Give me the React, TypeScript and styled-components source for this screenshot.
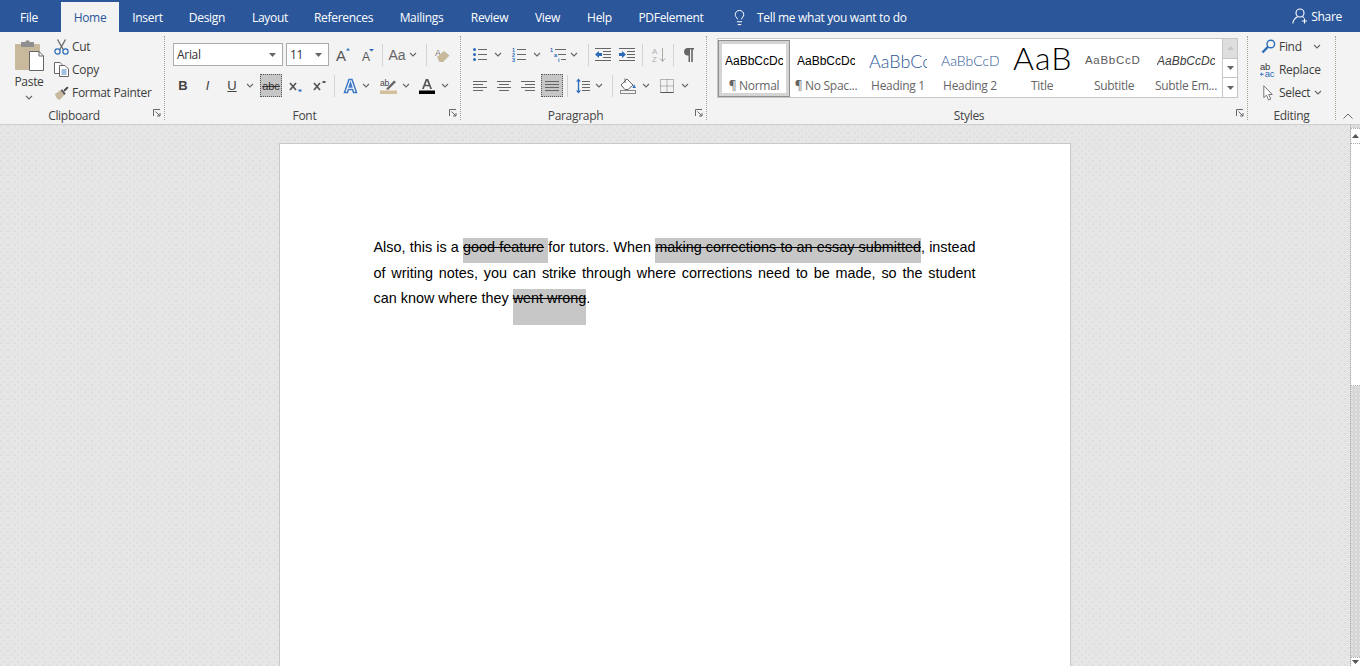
import type { FC, ReactNode } from "react";
import { Lightbulb } from "lucide-react";
import styled, { createGlobalStyle } from "styled-components";

const GlobalStyle = createGlobalStyle`
  html, body {
    height: 100%;
    margin: 0;
    overflow: hidden;
  }

  body {
    color: #3c3c3c;
    font-family: "Open Sans", "Noto Sans", sans-serif;
    font-size: 12px;
    letter-spacing: -0.3px;
  }

  * {
    box-sizing: border-box;
  }
`;

const Window = styled.div`
  display: flex;
  flex-direction: column;
  height: 666px;
  overflow: hidden;
  width: 1360px;
`;

const TabBar = styled.div`
  align-items: flex-end;
  background-color: #2b579a;
  color: #fff;
  display: flex;
  flex: none;
  height: 32px;
`;

const Tab = styled.div<{ $w: number; $ml?: number; $active?: boolean }>`
  align-items: center;
  background-color: ${({ $active }) => ($active ? "#f3f3f3" : "transparent")};
  color: ${({ $active }) => ($active ? "#2b579a" : "#fff")};
  display: flex;
  height: 30px;
  justify-content: center;
  margin-left: ${({ $ml }) => $ml ?? 0}px;
  padding-top: 1px;
  width: ${({ $w }) => $w}px;
`;

const TellMe = styled.div`
  align-items: center;
  display: flex;
  gap: 9px;
  height: 30px;
  margin-left: 14px;
`;

const Share = styled.div`
  align-items: center;
  display: flex;
  gap: 3px;
  height: 32px;
  margin-left: auto;
  padding-right: 18px;
`;

const Ribbon = styled.div`
  background-color: #f3f3f3;
  border-bottom: 1px solid #cfcfcf;
  display: flex;
  flex: none;
  height: 93px;
  padding-top: 4px;
  position: relative;
`;

const Group = styled.section<{ $w: number; $pad?: number }>`
  border-right: 1px dotted #a89f90;
  display: flex;
  flex-direction: column;
  flex: none;
  height: 84px;
  padding-left: ${({ $pad }) => $pad ?? 8}px;
  position: relative;
  width: ${({ $w }) => $w}px;
`;

const GroupBody = styled.div`
  display: flex;
  flex-direction: column;
  gap: 8px;
  padding-top: 7px;
`;

const GroupLabel = styled.div<{ $noLauncher?: boolean; $pad?: number }>`
  color: #444;
  height: 20px;
  line-height: 20px;
  margin-bottom: -6px;
  margin-left: ${({ $noLauncher, $pad }) => ($noLauncher ? 0 : -($pad ?? 8))}px;
  margin-top: auto;
  padding-right: ${({ $noLauncher }) => ($noLauncher ? 0 : 16)}px;
  text-align: center;
`;

const Launcher = styled.svg`
  bottom: 3px;
  position: absolute;
  right: 3px;
`;

const Row = styled.div`
  align-items: center;
  display: flex;
  height: 23px;
`;

const Cell = styled.div<{ $w: number; $ml?: number; $on?: boolean }>`
  align-items: center;
  background-color: ${({ $on }) => ($on ? "#c6c6c6" : "transparent")};
  border: ${({ $on }) => ($on ? "1px dotted #555" : "none")};
  display: flex;
  flex: none;
  height: ${({ $on }) => ($on ? "23px" : "auto")};
  justify-content: center;
  margin-left: ${({ $ml }) => $ml ?? 0}px;
  width: ${({ $w }) => $w}px;
`;

const Sep = styled.div<{ $ml: number }>`
  background-color: #d2d2d2;
  flex: none;
  height: 22px;
  margin-left: ${({ $ml }) => $ml}px;
  width: 1px;
`;

const Combo = styled.div<{ $w: number; $ml?: number }>`
  align-items: center;
  background-color: #fff;
  border: 1px solid #ababab;
  color: #333;
  display: flex;
  height: 23px;
  justify-content: space-between;
  margin-left: ${({ $ml }) => $ml ?? 0}px;
  padding: 0 6px 0 3px;
  width: ${({ $w }) => $w}px;
`;

const Letter = styled.span<{ $bold?: boolean; $italic?: boolean; $under?: boolean }>`
  color: #444;
  font-family: "Liberation Sans", sans-serif;
  font-size: 13px;
  font-style: ${({ $italic }) => ($italic ? "italic" : "normal")};
  font-weight: ${({ $bold }) => ($bold ? 700 : 400)};
  letter-spacing: 0;
  line-height: 1;
  text-decoration: ${({ $under }) => ($under ? "underline" : "none")};
`;

const ChangeCase = styled(Letter)`
  color: #666;
  font-size: 14px;
`;

const StrikeGlyph = styled.span`
  color: #333;
  font-family: "Liberation Sans", sans-serif;
  font-size: 11px;
  letter-spacing: 0;
  text-decoration: line-through;
`;

const ClipboardBody = styled.div`
  display: flex;
  margin-left: -8px;
`;

const PasteColumn = styled.div`
  align-items: center;
  display: flex;
  flex-direction: column;
  padding-left: 4px;
  padding-top: 4px;
  width: 54px;
`;

const PasteLabel = styled.div`
  line-height: 16px;
  margin-top: 3px;
`;

const PasteChevron = styled.div`
  display: flex;
  margin-top: 5px;
`;

const CommandList = styled.div<{ $pad?: number }>`
  display: flex;
  flex-direction: column;
  margin-top: -1px;
  padding-left: ${({ $pad }) => $pad ?? 0}px;
`;

const Command = styled.div`
  align-items: center;
  display: flex;
  gap: 3px;
  height: 23px;
  white-space: nowrap;
`;

const CommandIcon = styled.div<{ $w: number }>`
  display: flex;
  flex: none;
  justify-content: center;
  width: ${({ $w }) => $w}px;
`;

const TrailChevron = styled.div<{ $ml: number }>`
  display: flex;
  margin-left: ${({ $ml }) => $ml}px;
`;

const Gallery = styled.div`
  background-color: #fff;
  border: 1px solid #c6c6c6;
  display: flex;
  height: 60px;
  margin-top: 2px;
  width: 521px;
`;

const StyleItem = styled.div<{ $selected?: boolean }>`
  align-items: center;
  border: ${({ $selected }) => ($selected ? "1px solid #8f8f8f" : "1px solid transparent")};
  box-shadow: ${({ $selected }) => ($selected ? "inset 0 0 0 3px #d4d4d4" : "none")};
  display: flex;
  flex: 1;
  flex-direction: column;
  margin: ${({ $selected }) => ($selected ? "1px 0 0" : "0")};
  min-width: 0;
  overflow: hidden;
  padding: 0 6px;
`;

const StylePreview = styled.div<{
  $size: number;
  $color?: string;
  $italic?: boolean;
  $light?: boolean;
  $spacing?: number;
  $title?: boolean;
  $selected?: boolean;
}>`
  align-items: ${({ $title }) => ($title ? "flex-end" : "center")};
  color: ${({ $color }) => $color ?? "#000"};
  display: flex;
  flex: none;
  font-family: ${({ $light }) =>
    $light ? '"Lato", "Open Sans", sans-serif' : '"Liberation Sans", sans-serif'};
  font-size: ${({ $size }) => $size}px;
  font-style: ${({ $italic }) => ($italic ? "italic" : "normal")};
  font-weight: ${({ $light }) => ($light ? 300 : 400)};
  height: ${({ $title, $selected }) => ($title ? 31 : $selected ? 37 : 38)}px;
  letter-spacing: ${({ $spacing }) => $spacing ?? 0}px;
  line-height: 1;
  margin-top: ${({ $title }) => ($title ? 7 : 0)}px;
  overflow: hidden;
  padding: ${({ $title, $selected }) => ($title ? "0 0 4px" : $selected ? "2px 0 0" : "3px 0 0")};
  white-space: nowrap;
  width: 100%;
`;

const StyleName = styled.div`
  color: #666;
  line-height: 16px;
  white-space: nowrap;
`;

const GalleryScroll = styled.div`
  border-left: 1px solid #c6c6c6;
  display: flex;
  flex: none;
  flex-direction: column;
  width: 15px;
`;

const ScrollCell = styled.div<{ $off?: boolean }>`
  align-items: center;
  background-color: ${({ $off }) => ($off ? "#dedede" : "#fff")};
  border-bottom: 1px solid #c6c6c6;
  display: flex;
  flex: 1;
  justify-content: center;

  &:last-child {
    border-bottom: none;
  }
`;

const Collapse = styled.svg`
  bottom: 5px;
  position: absolute;
  right: 7px;
`;

const Workspace = styled.div`
  background-color: #e6e6e6;
  background-image: radial-gradient(circle at 1px 1px, #dedede 0.7px, transparent 0.9px),
    radial-gradient(circle at 1px 1px, #e0e0e0 0.7px, transparent 0.9px);
  background-position: 0 0, 3px 4px;
  background-size: 7px 7px;
  display: flex;
  flex: 1;
  min-height: 0;
`;

const PageArea = styled.div`
  display: flex;
  flex: 1;
  justify-content: center;
  min-width: 0;
  padding-right: 1px;
  padding-top: 18px;
`;

const Page = styled.div`
  background-color: #fff;
  border: 1px solid #c8c8c8;
  border-bottom: none;
  height: 700px;
  padding: 91px 94px 0 94px;
  width: 792px;
`;

const Paragraph = styled.p`
  color: #000;
  font-family: "Liberation Sans", Arial, sans-serif;
  font-size: 14.4px;
  letter-spacing: 0;
  line-height: 25.5px;
  margin: 0;
  text-align: justify;
`;

const NoBreak = styled.span`
  white-space: nowrap;
`;

const Selected = styled.span<{ $tall?: boolean }>`
  background-color: #c6c7c6;
  padding: 1px 0 ${({ $tall }) => ($tall ? 19 : 8)}px;
`;

const Struck = styled.span`
  text-decoration: line-through;
`;

const ScrollBar = styled.div`
  background-color: #d6d6d6;
  background-image: radial-gradient(circle at 1px 1px, #e2e2e2 0.7px, transparent 0.9px);
  background-size: 4px 4px;
  border-left: 1px dotted #a8a8a8;
  display: flex;
  flex: none;
  flex-direction: column;
  padding-top: 3px;
  width: 10px;
`;

const ScrollArrow = styled.div<{ $bottom?: boolean }>`
  align-items: center;
  background-color: #fff;
  border-bottom: ${({ $bottom }) => ($bottom ? "none" : "1px dotted #a8a8a8")};
  border-top: 1px dotted #a8a8a8;
  display: flex;
  flex: none;
  height: ${({ $bottom }) => ($bottom ? 9 : 16)}px;
  justify-content: center;
  margin-top: ${({ $bottom }) => ($bottom ? "auto" : "0")};
`;

const ScrollThumb = styled.div`
  background-color: #fff;
  border-bottom: 1px dotted #a8a8a8;
  flex: none;
  height: 242px;
`;

const ChevIcon = () => (
  <svg width="8" height="5" viewBox="0 0 8 5" fill="none" stroke="#666" strokeWidth="1.1">
    <polyline points="1,1 4,4 7,1" />
  </svg>
);

const Chev: FC<{ ml?: number }> = ({ ml }) => (
  <Cell $w={8} $ml={ml}>
    <ChevIcon />
  </Cell>
);

const Caret: FC<{ up?: boolean; color?: string }> = ({ up, color = "#666" }) => (
  <svg width="7" height="4" viewBox="0 0 7 4" fill={color}>
    <polygon points={up ? "0,4 7,4 3.5,0" : "0,0 7,0 3.5,4"} />
  </svg>
);

const LauncherIcon = () => (
  <Launcher width="8" height="8" viewBox="0 0 8 8" fill="none" stroke="#666" strokeWidth="1">
    <path d="M0.5 7V0.5H7" />
    <path d="M2.5 2.5L7 7M7 4V7H4" />
  </Launcher>
);

const PasteIcon = () => (
  <svg width="30" height="31" viewBox="0 0 30 31">
    <rect x="1" y="4" width="25" height="26" rx="1" fill="#c8b89c" />
    <rect x="7" y="2" width="13" height="5" fill="#8f8f8f" />
    <circle cx="13.5" cy="2.5" r="2.3" fill="#8f8f8f" />
    <path d="M15.5 11.5H25L29.5 16V30.5H15.5Z" fill="#fff" stroke="#666" />
    <path d="M25 11.5V16H29.5" fill="none" stroke="#666" />
  </svg>
);

const CutIcon = () => (
  <svg width="15" height="16" viewBox="0 0 15 16" fill="none">
    <path d="M3.5 0.5L9.5 11M11.5 0.5L5.5 11" stroke="#666" strokeWidth="1.3" />
    <circle cx="3.5" cy="12.5" r="2.6" stroke="#2b6cb8" strokeWidth="1.2" />
    <circle cx="11.5" cy="12.5" r="2.6" stroke="#2b6cb8" strokeWidth="1.2" />
  </svg>
);

const CopyIcon = () => (
  <svg width="15" height="15" viewBox="0 0 15 15" fill="#fff" stroke="#666">
    <path d="M0.5 0.5H6L8 2.5V11.5H0.5Z" />
    <path d="M5.5 3.5H11L14.5 7V14.5H5.5Z" />
    <path d="M7.5 8H12.5M7.5 10H12.5M7.5 12H12.5" stroke="#4a7ebb" />
  </svg>
);

const BrushIcon = () => (
  <svg width="16" height="16" viewBox="0 0 16 16">
    <path d="M1 9L7 5L11 10L6 15.5C4 15 1.5 12 1 9Z" fill="#c8b89c" />
    <path d="M7 5L11 10L12.5 8.5L8.5 4Z" fill="#555" />
    <path d="M10 5L14 1L15.5 2.5L11.5 6.5Z" fill="#444" />
  </svg>
);

const GrowIcon: FC<{ shrink?: boolean }> = ({ shrink }) => (
  <svg width="16" height="16" viewBox="0 0 16 16">
    <text
      x={shrink ? 3 : 1}
      y="14"
      fontFamily="Liberation Sans"
      fontSize={shrink ? 12 : 15}
      fill="#555"
    >
      A
    </text>
    <polygon points={shrink ? "10,2 15,2 12.5,4.5" : "11,3.5 15,3.5 13,1"} fill="#2b6cb8" />
  </svg>
);

const ClearIcon = () => (
  <svg width="16" height="16" viewBox="0 0 16 16">
    <text x="1" y="9" fontFamily="Liberation Sans" fontSize="9" fill="#777">
      A
    </text>
    <path d="M3 10L10 4L15.5 8.5L9 15L5.5 15Z" fill="#c8b89c" />
  </svg>
);

const SubSupIcon: FC<{ sup?: boolean }> = ({ sup }) => (
  <svg width="13" height="13" viewBox="0 0 13 13">
    <path d="M1 4L7 11M7 4L1 11" stroke="#555" strokeWidth="1.7" />
    <rect x="9.5" y={sup ? 2 : 10.5} width="3" height="2" fill={sup ? "#555" : "#2b6cb8"} />
  </svg>
);

const TextEffectIcon = () => (
  <svg width="15" height="16" viewBox="0 0 15 16">
    <path
      d="M6 1.5H9L13.5 14.5H10.5L9.6 11.5H5.4L4.5 14.5H1.5ZM6.2 9H8.8L7.5 5Z"
      fill="#fff"
      stroke="#3f78c4"
      strokeWidth="1.5"
    />
  </svg>
);

const HighlightIcon = () => (
  <svg width="17" height="16" viewBox="0 0 17 16">
    <text x="0" y="8" fontFamily="Liberation Sans" fontSize="8.5" fill="#444">
      ab
    </text>
    <path d="M6 11L14 2.5L16 4L8 12Z" fill="#666" />
    <rect x="0" y="12.5" width="17" height="3.5" fill="#d3bf99" />
  </svg>
);

const FontColorIcon = () => (
  <svg width="16" height="16" viewBox="0 0 16 16">
    <path d="M6.8 1H9.2L13 11H11.2L10.2 8.2H5.8L4.8 11H3ZM6.3 6.8H9.7L8 2.8Z" fill="#555" />
    <rect y="12.5" width="16" height="3.5" fill="#000" />
  </svg>
);

const BulletsIcon = () => (
  <svg width="14" height="15" viewBox="0 0 14 15" stroke="#666">
    <path d="M5 2.5H14M5 7.5H14M5 12.5H14" />
    <g fill="#2b6cb8" stroke="none">
      <circle cx="1.5" cy="2.5" r="1.5" />
      <circle cx="1.5" cy="7.5" r="1.5" />
      <circle cx="1.5" cy="12.5" r="1.5" />
    </g>
  </svg>
);

const NumberedIcon = () => (
  <svg width="14" height="15" viewBox="0 0 14 15" stroke="#666">
    <path d="M5 2.5H14M5 7.5H14M5 12.5H14" />
    <g fontFamily="Liberation Sans" fontSize="5.5" fontWeight="700" fill="#2b6cb8" stroke="none">
      <text x="0" y="5">1</text>
      <text x="0" y="10">2</text>
      <text x="0" y="15">3</text>
    </g>
  </svg>
);

const MultilevelIcon = () => (
  <svg width="16" height="15" viewBox="0 0 16 15" stroke="#666">
    <path d="M5 2.5H16M8 7.5H16M11 12.5H16" />
    <g fontFamily="Liberation Sans" fontSize="5.5" fontWeight="700" fill="#2b6cb8" stroke="none">
      <text x="0" y="5">1</text>
      <text x="4" y="10">a</text>
      <text x="8" y="15">i</text>
    </g>
  </svg>
);

const IndentIcon: FC<{ out?: boolean }> = ({ out }) => (
  <svg width="16" height="13" viewBox="0 0 16 13" stroke="#666">
    <path d="M0 0.5H16M8 3.5H16M8 6.5H16M8 9.5H16M0 12.5H16" />
    <path
      d={out ? "M0 6.5L4 3V5H7V8H4V10Z" : "M7 6.5L3 3V5H0V8H3V10Z"}
      fill="#2b6cb8"
      stroke="none"
    />
  </svg>
);

const SortIcon = () => (
  <svg width="14" height="16" viewBox="0 0 14 16">
    <g fontFamily="Liberation Sans" fontSize="8" fill="#b0b0b0">
      <text x="0" y="7">A</text>
      <text x="0" y="15">Z</text>
    </g>
    <path d="M10.5 1V14M8 11.5L10.5 14.5L13 11.5" fill="none" stroke="#a8a8a8" />
  </svg>
);

const PilcrowIcon = () => (
  <svg width="10" height="14" viewBox="0 0 10 14" fill="#666">
    <path d="M3.5 0H10V1.5H8.8V14H7.2V1.5H6V14H4.5V7.5H3.5C1.5 7.5 0 6 0 3.8C0 1.5 1.5 0 3.5 0Z" />
  </svg>
);

const alignPaths: Record<string, string> = {
  left: "M0 0.5H14M0 3.5H10M0 6.5H14M0 9.5H10",
  center: "M0 0.5H14M2 3.5H12M0 6.5H14M2 9.5H12",
  right: "M0 0.5H14M4 3.5H14M0 6.5H14M4 9.5H14",
  justify: "M0 0.5H14M0 3.5H14M0 6.5H14M0 9.5H14",
};

const AlignIcon: FC<{ kind: string }> = ({ kind }) => (
  <svg width="14" height="10" viewBox="0 0 14 10" stroke="#666">
    <path d={alignPaths[kind]} />
  </svg>
);

const LineSpacingIcon = () => (
  <svg width="14" height="16" viewBox="0 0 14 16" stroke="#666">
    <path d="M6 3.5H14M6 6.5H14M6 9.5H14M6 12.5H14" />
    <path d="M2.5 2V14" stroke="#2b6cb8" strokeWidth="1.3" fill="none" />
    <path d="M0 3.5L2.5 0.5L5 3.5ZM0 12.5L2.5 15.5L5 12.5Z" fill="#2b6cb8" stroke="none" />
  </svg>
);

const ShadingIcon = () => (
  <svg width="16" height="17" viewBox="0 0 16 17">
    <path d="M1 8L7 2L13 8L8 12.5H5Z" fill="#fff" stroke="#666" />
    <path d="M5 1.5V6" stroke="#666" />
    <path d="M14 7L15.8 11H12.5Z" fill="#2b6cb8" />
    <rect x="0.5" y="13.5" width="15" height="3" fill="#f3f3f3" stroke="#888" />
  </svg>
);

const BordersIcon = () => (
  <svg width="14" height="14" viewBox="0 0 14 14" fill="none" stroke="#777" strokeDasharray="1 1">
    <rect x="0.5" y="0.5" width="13" height="13" />
    <path d="M7 0.5V13.5M0.5 7H13.5" />
    <path d="M0.5 13.5H13.5" strokeDasharray="none" stroke="#555" />
  </svg>
);

const FindIcon = () => (
  <svg width="15" height="15" viewBox="0 0 15 15" fill="none" stroke="#2b6cb8">
    <circle cx="9.8" cy="5" r="3.8" strokeWidth="1.4" />
    <path d="M6.8 8L1.5 13.5" strokeWidth="2.4" />
  </svg>
);

const ReplaceIcon = () => (
  <svg width="17" height="16" viewBox="0 0 17 16" fontFamily="Liberation Sans" fontSize="10">
    <text x="0" y="8" fill="#333">ab</text>
    <text x="5" y="15.5" fill="#2b6cb8">ac</text>
    <path d="M0.5 12.5H4M0.5 12.5L2.3 10.8M0.5 12.5L2.3 14.2" stroke="#2b6cb8" fill="none" />
  </svg>
);

const SelectIcon = () => (
  <svg width="10" height="16" viewBox="0 0 10 16" fill="#fff" stroke="#777">
    <path d="M0.8 0.8V12.5L3.5 10.2L5.6 15L7.8 14L5.7 9.5H9.3Z" />
  </svg>
);

const ShareIcon = () => (
  <svg width="16" height="16" viewBox="0 0 16 16" fill="none" stroke="#fff" strokeWidth="1.1">
    <circle cx="8" cy="5" r="4" />
    <path d="M0.8 15.5C1.2 12 3.2 10 5.5 8.8M10.5 8.8C11 9 11.6 9.4 12 9.8" />
    <path d="M12.5 10.5V15.5M10 13H15" />
  </svg>
);

const tabs = [
  { label: "File", w: 58 },
  { label: "Home", w: 58, ml: 3, active: true },
  { label: "Insert", w: 57 },
  { label: "Design", w: 62 },
  { label: "Layout", w: 64 },
  { label: "References", w: 83 },
  { label: "Mailings", w: 73 },
  { label: "Review", w: 63 },
  { label: "View", w: 53 },
  { label: "Help", w: 51 },
  { label: "PDFelement", w: 92 },
];

const galleryStyles: {
  name: string;
  sample: string;
  size: number;
  color?: string;
  italic?: boolean;
  light?: boolean;
  spacing?: number;
  selected?: boolean;
  title?: boolean;
}[] = [
  { name: "¶ Normal", sample: "AaBbCcDc", size: 12, selected: true },
  { name: "¶ No Spac...", sample: "AaBbCcDc", size: 12 },
  { name: "Heading 1", sample: "AaBbCc", size: 18, color: "#2b5797", light: true },
  { name: "Heading 2", sample: "AaBbCcD", size: 14, color: "#2b5797", light: true },
  { name: "Title", sample: "AaB", size: 32, light: true, spacing: 1, title: true },
  { name: "Subtitle", sample: "AaBbCcD", size: 11.5, color: "#5a5a5a", spacing: 0.7 },
  { name: "Subtle Em...", sample: "AaBbCcDc", size: 12, color: "#404040", italic: true },
];

const Item: FC<{ icon: ReactNode; w: number; label: string; chev?: number }> = ({
  icon,
  w,
  label,
  chev,
}) => (
  <Command>
    <CommandIcon $w={w}>{icon}</CommandIcon>
    {label}
    {chev !== undefined && (
      <TrailChevron $ml={chev}>
        <ChevIcon />
      </TrailChevron>
    )}
  </Command>
);

const App: FC = () => (
  <Window>
    <GlobalStyle />
    <TabBar>
      {tabs.map((tab) => (
        <Tab key={tab.label} $w={tab.w} $ml={tab.ml} $active={tab.active}>
          {tab.label}
        </Tab>
      ))}
      <TellMe>
        <Lightbulb size={17} strokeWidth={1.4} color="#fff" />
        Tell me what you want to do
      </TellMe>
      <Share>
        <ShareIcon />
        Share
      </Share>
    </TabBar>

    <Ribbon>
      <Group $w={165}>
        <ClipboardBody>
          <PasteColumn>
            <PasteIcon />
            <PasteLabel>Paste</PasteLabel>
            <PasteChevron>
              <ChevIcon />
            </PasteChevron>
          </PasteColumn>
          <CommandList>
            <Item icon={<CutIcon />} w={15} label="Cut" />
            <Item icon={<CopyIcon />} w={15} label="Copy" />
            <Item icon={<BrushIcon />} w={15} label="Format Painter" />
          </CommandList>
        </ClipboardBody>
        <GroupLabel>Clipboard</GroupLabel>
        <LauncherIcon />
      </Group>

      <Group $w={296}>
        <GroupBody>
          <Row>
            <Combo $w={110}>
              Arial
              <Caret />
            </Combo>
            <Combo $w={43} $ml={3}>
              11
              <Caret />
            </Combo>
            <Cell $w={16} $ml={6}>
              <GrowIcon />
            </Cell>
            <Cell $w={16} $ml={8}>
              <GrowIcon shrink />
            </Cell>
            <Sep $ml={7} />
            <Cell $w={16} $ml={6}>
              <ChangeCase>Aa</ChangeCase>
            </Cell>
            <Chev ml={4} />
            <Sep $ml={9} />
            <Cell $w={16} $ml={7}>
              <ClearIcon />
            </Cell>
          </Row>
          <Row>
            <Cell $w={10} $ml={5}>
              <Letter $bold>B</Letter>
            </Cell>
            <Cell $w={7} $ml={16}>
              <Letter $italic>I</Letter>
            </Cell>
            <Cell $w={10} $ml={16}>
              <Letter $under>U</Letter>
            </Cell>
            <Chev ml={9} />
            <Cell $w={22} $ml={6} $on>
              <StrikeGlyph>abc</StrikeGlyph>
            </Cell>
            <Cell $w={13} $ml={7}>
              <SubSupIcon />
            </Cell>
            <Cell $w={13} $ml={11}>
              <SubSupIcon sup />
            </Cell>
            <Sep $ml={8} />
            <Cell $w={15} $ml={8}>
              <TextEffectIcon />
            </Cell>
            <Chev ml={4} />
            <Cell $w={17} $ml={10}>
              <HighlightIcon />
            </Cell>
            <Chev ml={5} />
            <Cell $w={16} $ml={9}>
              <FontColorIcon />
            </Cell>
            <Chev ml={6} />
          </Row>
        </GroupBody>
        <GroupLabel>Font</GroupLabel>
        <LauncherIcon />
      </Group>

      <Group $w={246}>
        <GroupBody>
          <Row>
            <Cell $w={14} $ml={4}>
              <BulletsIcon />
            </Cell>
            <Chev ml={7} />
            <Cell $w={14} $ml={10}>
              <NumberedIcon />
            </Cell>
            <Chev ml={7} />
            <Cell $w={16} $ml={9}>
              <MultilevelIcon />
            </Cell>
            <Chev ml={4} />
            <Sep $ml={10} />
            <Cell $w={16} $ml={6}>
              <IndentIcon out />
            </Cell>
            <Cell $w={16} $ml={8}>
              <IndentIcon />
            </Cell>
            <Sep $ml={7} />
            <Cell $w={14} $ml={9}>
              <SortIcon />
            </Cell>
            <Sep $ml={7} />
            <Cell $w={10} $ml={10}>
              <PilcrowIcon />
            </Cell>
          </Row>
          <Row>
            <Cell $w={14} $ml={4}>
              <AlignIcon kind="left" />
            </Cell>
            <Cell $w={14} $ml={10}>
              <AlignIcon kind="center" />
            </Cell>
            <Cell $w={14} $ml={10}>
              <AlignIcon kind="right" />
            </Cell>
            <Cell $w={22} $ml={6} $on>
              <AlignIcon kind="justify" />
            </Cell>
            <Sep $ml={4} />
            <Cell $w={14} $ml={8}>
              <LineSpacingIcon />
            </Cell>
            <Chev ml={5} />
            <Sep $ml={9} />
            <Cell $w={16} $ml={7}>
              <ShadingIcon />
            </Cell>
            <Chev ml={6} />
            <Cell $w={14} $ml={10}>
              <BordersIcon />
            </Cell>
            <Chev ml={7} />
          </Row>
        </GroupBody>
        <GroupLabel>Paragraph</GroupLabel>
        <LauncherIcon />
      </Group>

      <Group $w={541} $pad={10}>
        <Gallery>
          {galleryStyles.map((item) => (
            <StyleItem key={item.name} $selected={item.selected}>
              <StylePreview
                $size={item.size}
                $color={item.color}
                $italic={item.italic}
                $light={item.light}
                $spacing={item.spacing}
                $title={item.title}
                $selected={item.selected}
              >
                {item.sample}
              </StylePreview>
              <StyleName>{item.name}</StyleName>
            </StyleItem>
          ))}
          <GalleryScroll>
            <ScrollCell $off>
              <Caret up color="#c6c6c6" />
            </ScrollCell>
            <ScrollCell>
              <Caret />
            </ScrollCell>
            <ScrollCell>
              <Caret />
            </ScrollCell>
          </GalleryScroll>
        </Gallery>
        <GroupLabel $pad={10}>Styles</GroupLabel>
        <LauncherIcon />
      </Group>

      <Group $w={88} $pad={0}>
        <CommandList $pad={12}>
          <Item icon={<FindIcon />} w={16} label="Find" chev={8} />
          <Item icon={<ReplaceIcon />} w={16} label="Replace" />
          <Item icon={<SelectIcon />} w={16} label="Select" chev={1} />
        </CommandList>
        <GroupLabel $noLauncher>Editing</GroupLabel>
      </Group>

      <Collapse width="10" height="6" viewBox="0 0 10 6" fill="none" stroke="#666">
        <polyline points="0.5,5.5 5,1 9.5,5.5" />
      </Collapse>
    </Ribbon>

    <Workspace>
      <PageArea>
        <Page>
          <Paragraph>
            Also, this is a{" "}
            <Selected>
              <Struck>good feature</Struck>{" "}
            </Selected>
            for tutors. When{" "}
            <Selected>
              <Struck>making corrections to an essay submitted</Struck>
            </Selected>
            , instead of writing notes, you can strike through where corrections need to be
            made, so the student <NoBreak>can know</NoBreak> where they{" "}
            <Selected $tall>
              <Struck>went wrong</Struck>
            </Selected>
            .
          </Paragraph>
        </Page>
      </PageArea>
      <ScrollBar>
        <ScrollArrow>
          <Caret up color="#555" />
        </ScrollArrow>
        <ScrollThumb />
        <ScrollArrow $bottom>
          <Caret color="#555" />
        </ScrollArrow>
      </ScrollBar>
    </Workspace>
  </Window>
);

export default App;
